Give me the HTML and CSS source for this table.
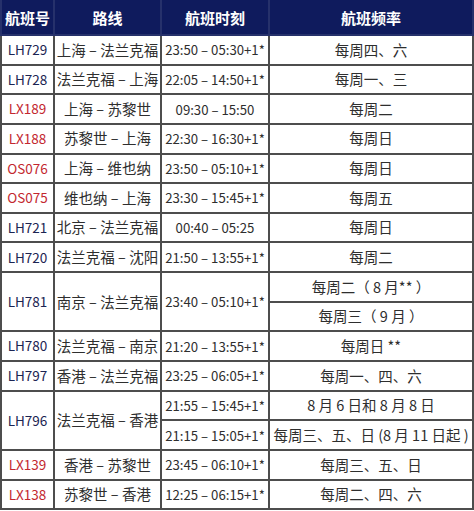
FILE: index.html
```html
<!DOCTYPE html>
<html lang="zh">
<head>
<meta charset="utf-8">
<link rel="stylesheet" href="styles.css">
</head>
<body>
<table class="schedule">
  <colgroup>
    <col class="c-no"><col class="c-route"><col class="c-time"><col class="c-freq">
  </colgroup>
  <thead>
    <tr><th>航班号</th><th>路线</th><th>航班时刻</th><th>航班频率</th></tr>
  </thead>
  <tbody>
    <tr><td class="lh">LH729</td><td class="rt">上海 – 法兰克福</td><td class="tm">23:50 – 05:30+1*</td><td class="fq">每周四、六</td></tr>
    <tr><td class="lh">LH728</td><td class="rt">法兰克福 – 上海</td><td class="tm">22:05 – 14:50+1*</td><td class="fq">每周一、三</td></tr>
    <tr><td class="lx">LX189</td><td class="rt">上海 – 苏黎世</td><td class="tm">09:30 – 15:50</td><td class="fq">每周二</td></tr>
    <tr><td class="lx">LX188</td><td class="rt">苏黎世 – 上海</td><td class="tm">22:30 – 16:30+1*</td><td class="fq">每周日</td></tr>
    <tr><td class="lx">OS076</td><td class="rt">上海 – 维也纳</td><td class="tm">23:50 – 05:10+1*</td><td class="fq">每周日</td></tr>
    <tr><td class="lx">OS075</td><td class="rt">维也纳 – 上海</td><td class="tm">23:30 – 15:45+1*</td><td class="fq">每周五</td></tr>
    <tr><td class="lh">LH721</td><td class="rt">北京 – 法兰克福</td><td class="tm">00:40 – 05:25</td><td class="fq">每周日</td></tr>
    <tr><td class="lh">LH720</td><td class="rt">法兰克福 – 沈阳</td><td class="tm">21:50 – 13:55+1*</td><td class="fq">每周二</td></tr>
    <tr><td class="lh" rowspan="2">LH781</td><td class="rt" rowspan="2">南京 – 法兰克福</td><td class="tm" rowspan="2">23:40 – 05:10+1*</td><td class="fq">每周二（ 8 月** ）</td></tr>
    <tr><td class="fq">每周三（ 9 月 ）</td></tr>
    <tr><td class="lh">LH780</td><td class="rt">法兰克福 – 南京</td><td class="tm">21:20 – 13:55+1*</td><td class="fq">每周日 **</td></tr>
    <tr><td class="lh">LH797</td><td class="rt">香港 – 法兰克福</td><td class="tm">23:25 – 06:05+1*</td><td class="fq">每周一、四、六</td></tr>
    <tr><td class="lh" rowspan="2">LH796</td><td class="rt" rowspan="2">法兰克福 – 香港</td><td class="tm">21:55 – 15:45+1*</td><td class="fq">8 月 6 日和 8 月 8 日</td></tr>
    <tr><td class="tm">21:15 – 15:05+1*</td><td class="fq">每周三、五、日 (8 月 11 日起 )</td></tr>
    <tr><td class="lx">LX139</td><td class="rt">香港 – 苏黎世</td><td class="tm">23:45 – 06:10+1*</td><td class="fq">每周三、五、日</td></tr>
    <tr><td class="lx">LX138</td><td class="rt">苏黎世 – 香港</td><td class="tm">12:25 – 06:15+1*</td><td class="fq">每周二、四、六</td></tr>
  </tbody>
</table>
</body>
</html>
```

FILE: styles.css
```css
html, body {
  margin: 0;
  padding: 0;
  background: #ffffff;
}

.schedule {
  border-collapse: collapse;
  table-layout: fixed;
  width: 472px;
  font-family: "Noto Sans CJK SC", "Noto Sans", sans-serif;
  color: #2e2e2e;
}

.c-no { width: 53px; }
.c-route { width: 107px; }
.c-time { width: 108px; }
.c-freq { width: 204px; }

.schedule th {
  background: #0f1b5d;
  color: #ffffff;
  font-weight: 700;
  font-size: 15px;
  height: 34px;
  padding: 0;
  border: 2px solid #26316b;
  border-top: none;
  text-align: center;
  vertical-align: middle;
  line-height: 1;
}

.schedule td {
  height: 27.65px;
  padding: 0;
  border: 2px solid #4d4d4d;
  text-align: center;
  vertical-align: middle;
  white-space: nowrap;
  line-height: 1;
  overflow: hidden;
}

.schedule td.rt { font-size: 14.5px; }
.schedule td.tm { font-size: 13.2px; }
.schedule td.fq { font-size: 14.5px; }

.schedule td.lh {
  color: #1b2452;
  font-size: 13.5px;
}

.schedule td.lx {
  color: #c3272f;
  font-size: 13.5px;
}
```
